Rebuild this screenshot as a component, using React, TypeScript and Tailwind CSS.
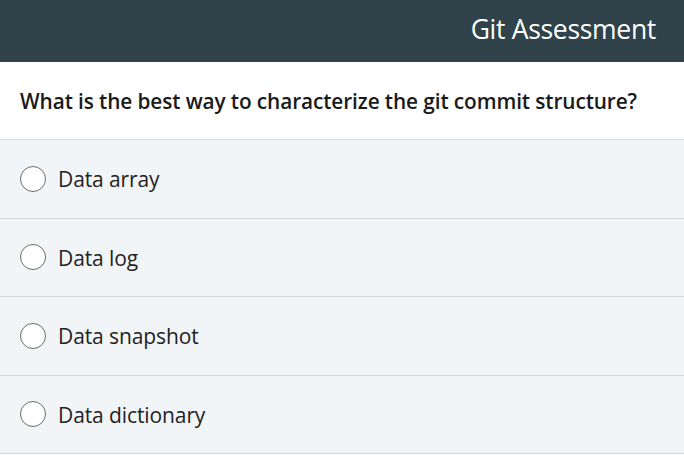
import React from "react";

const options = ["Data array", "Data log", "Data snapshot", "Data dictionary"];

export default function App() {
  return (
    <div className="w-[684px] h-[455px] bg-white overflow-hidden" style={{ fontFamily: '"Open Sans", "Noto Sans", sans-serif' }}>
      <div className="h-[62px] bg-[#30434a] flex items-center justify-end pr-[28px]">
        <span className="text-white text-[26.5px] tracking-[-0.3px] leading-none pb-[4px]">Git Assessment</span>
      </div>
      <div className="h-[78px] flex items-center pl-[20px] border-b border-[#d9dbdd]">
        <span className="text-[#1a1a1a] text-[20.8px] font-semibold tracking-[-0.1px] pt-[2px]">What is the best way to characterize the git commit structure?</span>
      </div>
      {options.map((o) => (
        <div key={o} className="h-[78.5px] bg-[#f2f5f8] border-b border-[#d3d5d7] flex items-center pl-[20px]">
          <span className="w-[26px] h-[26px] rounded-full border-[1.5px] border-[#6b6b6b] bg-white shrink-0" />
          <span className="ml-[12px] text-[#222] text-[21px] tracking-[-0.1px] pt-[2px]">{o}</span>
        </div>
      ))}
    </div>
  );
}
